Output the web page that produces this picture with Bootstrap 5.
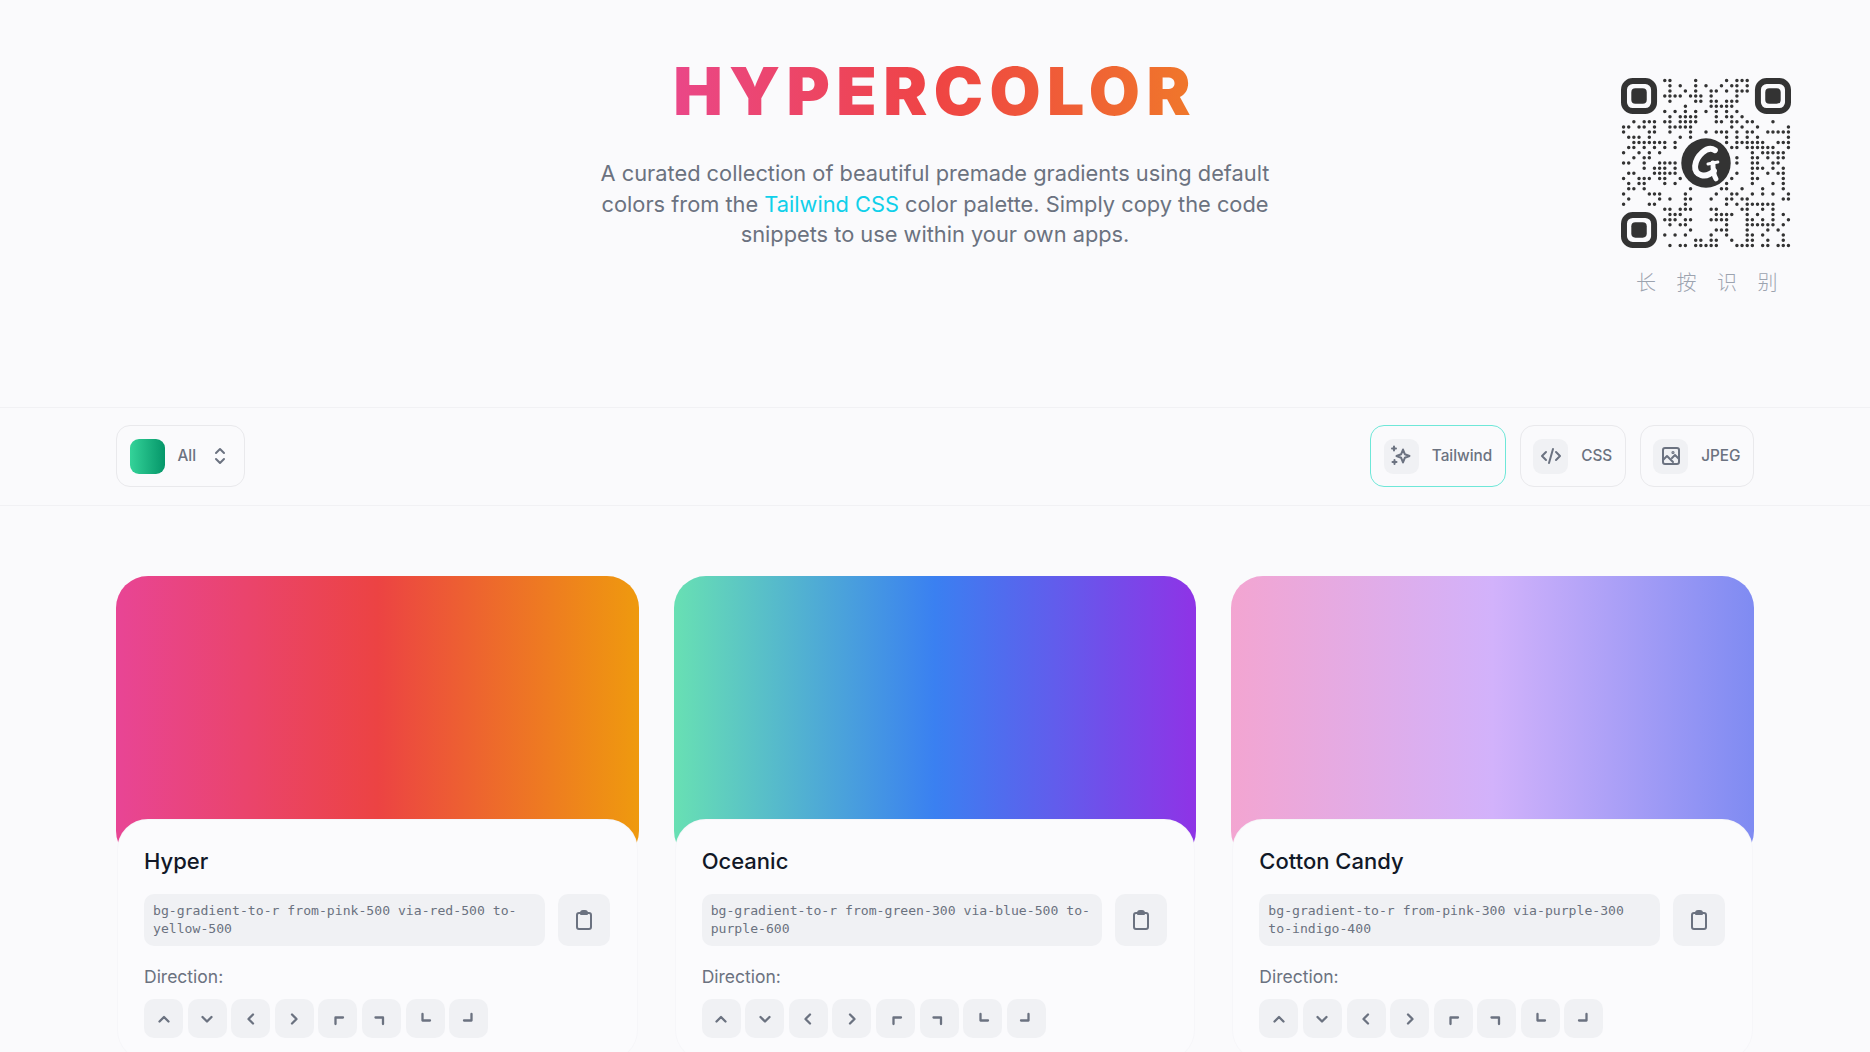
<!DOCTYPE html>
<html lang="en">
<head>
  <meta charset="UTF-8" />
  <meta name="viewport" content="width=device-width, initial-scale=1.0" />
  <title>Hypercolor</title>
  <link href="https://cdn.jsdelivr.net/npm/bootstrap@5.3.2/dist/css/bootstrap.min.css" rel="stylesheet" />
  <style>
    html, body { height: 100%; overflow: hidden; }
    body { background: #fafafc; font-family: Inter, "Noto Sans", sans-serif; color: #6b7280; }
    svg { display: block; }

    .hero { display: grid; grid-template-columns: 1fr 700px 1fr; height: 407px; }
    .hero-title { font-size: 66px; line-height: 82px; font-weight: 900; letter-spacing: 6.4px; margin: 50px 0 0; text-align: center; }
    .hero-title span { background: linear-gradient(to right, #ea4788, #ef4444 50%, #f0782a); -webkit-background-clip: text; background-clip: text; color: transparent; }
    .hero-text { font-size: 21.8px; line-height: 30.5px; text-align: center; margin: 26px 14px 0; }
    .hero-text a { color: #0fd0ea; text-decoration: none; }
    .qr-box { justify-self: end; width: 170px; margin: 78px 79px 0 0; }
    .qr-hint { font-family: Inter, "Noto Sans CJK SC", sans-serif; font-weight: 300; font-size: 20px; line-height: 26px; letter-spacing: 20.5px; color: #9ca3af; margin: 22px 0 0 15px; white-space: nowrap; }

    .filter-bar { height: 99px; padding: 17px 116px; border-top: 1px solid #f1f1f4; border-bottom: 1px solid #f1f1f4; }
    .tool-btn { height: 62px; padding: 0 12.5px; gap: 13px; font-size: 15.3px; font-weight: 500; color: #6b7280; background: transparent; border: 1.5px solid #e9e9ec; border-radius: 14px; }
    .tool-btn:hover { color: #6b7280; border-color: #e9e9ec; }
    .tool-btn.selected { border-color: #6ee7d8; }
    .tool-group { gap: 14px; }
    .tool-icon { width: 35px; height: 35px; border-radius: 9px; background: #f0f1f4; }
    .swatch { width: 35px; height: 35px; border-radius: 9px; background: linear-gradient(to right, #34d399, #059669); }
    .select-arrows { margin: 0 2px 0 2px; }

    .card-grid { display: grid; grid-template-columns: repeat(3, 1fr); gap: 35px; padding: 70px 116px 0; }
    .gradient-box { height: 287px; border-radius: 32px; }
    .gradient-panel { margin: -43px 2px 0; padding: 26px 27px 22px 26px; background: #fbfbfd; border-radius: 30px; box-shadow: 0 0 0 1px #f6f6f9; position: relative; }
    .gradient-name { font-size: 22px; line-height: 30px; font-weight: 500; color: #111827; margin: 0 0 18px; }
    .code-box { flex: 1; height: 52px; padding: 8px 9px; background: #f0f1f4; border-radius: 10px; font-family: "DejaVu Sans Mono", "Liberation Mono", monospace; font-size: 13.13px; line-height: 18px; color: #6b7280; }
    .copy-btn { width: 52px; height: 52px; padding: 0; border: 0; border-radius: 10px; background: #f0f1f4; }
    .code-row { gap: 13px; }
    .direction-label { font-size: 17.5px; line-height: 24px; margin: 19px 0 10px; }
    .dir-btn { width: 39px; height: 39px; padding: 0; border: 0; border-radius: 10px; background: #f0f1f4; }
    .dir-row { gap: 4.6px; }
    .stroke-icon { fill: none; stroke: #6b7280; stroke-width: 2; stroke-linecap: round; stroke-linejoin: round; }
    .dir-btn .stroke-icon { stroke-width: 2.3; }
  </style>
</head>
<body>

  <header class="hero">
    <div></div>
    <div>
      <h1 class="hero-title"><span>HYPERCOLOR</span></h1>
      <p class="hero-text">A curated collection of beautiful premade gradients using default colors from the <a href="#">Tailwind CSS</a> color palette. Simply copy the code snippets to use within your own apps.</p>
    </div>
    <div class="qr-box">
      <svg id="qrCode" width="170" height="170" viewBox="0 0 33 33"></svg>
      <div class="qr-hint">长按识别</div>
    </div>
  </header>

  <div class="filter-bar d-flex justify-content-between align-items-start">
    <button class="btn tool-btn d-flex align-items-center">
      <span class="swatch"></span>
      All
      <svg class="stroke-icon select-arrows" width="18" height="22" viewBox="0 0 18 22"><path d="M5 8l4-4 4 4M5 14l4 4 4-4" /></svg>
    </button>
    <div class="d-flex tool-group">
      <button class="btn tool-btn selected d-flex align-items-center">
        <span class="tool-icon d-flex align-items-center justify-content-center">
          <svg class="stroke-icon" width="22" height="22" viewBox="0 0 22 22"><path d="M13 4.5l1.8 4.7 4.7 1.8-4.7 1.8-1.8 4.7-1.8-4.7-4.7-1.8 4.7-1.8zM4 1.5v4M2 3.5h4M4.5 15v4M2.5 17h4" /></svg>
        </span>
        Tailwind
      </button>
      <button class="btn tool-btn d-flex align-items-center">
        <span class="tool-icon d-flex align-items-center justify-content-center">
          <svg class="stroke-icon" width="22" height="22" viewBox="0 0 22 22"><path d="M6 7l-4 4 4 4M16 7l4 4-4 4M13 4L9 18" /></svg>
        </span>
        CSS
      </button>
      <button class="btn tool-btn d-flex align-items-center">
        <span class="tool-icon d-flex align-items-center justify-content-center">
          <svg class="stroke-icon" width="22" height="22" viewBox="0 0 22 22"><rect x="3" y="3" width="16" height="16" rx="2" /><path d="M3 15l4-4 6 6M12 13l3-3 4 4" /><circle cx="13" cy="7.5" r=".6" /></svg>
        </span>
        JPEG
      </button>
    </div>
  </div>

  <main class="card-grid" id="cardGrid"></main>

  <script>
    const gradients = [
      { name: "Hyper", code: "bg-gradient-to-r from-pink-500 via-red-500 to-yellow-500", css: "#e84595, #ec4343, #ef9a0e" },
      { name: "Oceanic", code: "bg-gradient-to-r from-green-300 via-blue-500 to-purple-600", css: "#68e0b3, #3a80f1, #8f33e6" },
      { name: "Cotton Candy", code: "bg-gradient-to-r from-pink-300 via-purple-300 to-indigo-400", css: "#f3a5d1, #d2b2fb, #7f8bf2" }
    ];

    const directionIcons = [
      "M4.5 11.5L9 7l4.5 4.5", "M4.5 7L9 11.5 13.5 7", "M11 4.5L6.5 9l4.5 4.5", "M7 4.5L11.5 9 7 13.5",
      "M6.5 14V7.5H14", "M3.5 7.5H11V14", "M6.5 4v6.5H14", "M11.5 4v6.5H4"
    ];

    const grid = document.getElementById("cardGrid");
    gradients.forEach(item => {
      const buttons = directionIcons.map(d => `
        <button class="btn dir-btn d-flex align-items-center justify-content-center">
          <svg class="stroke-icon" width="18" height="18" viewBox="0 0 18 18"><path d="${d}" /></svg>
        </button>`).join("");

      grid.innerHTML += `
        <div>
          <div class="gradient-box" style="background: linear-gradient(to right, ${item.css});"></div>
          <div class="gradient-panel">
            <h5 class="gradient-name">${item.name}</h5>
            <div class="d-flex code-row">
              <div class="code-box">${item.code}</div>
              <button class="btn copy-btn d-flex align-items-center justify-content-center">
                <svg class="stroke-icon" width="24" height="24" viewBox="0 0 24 24"><rect x="5" y="5" width="14" height="16" rx="2" /><path d="M9 5a2 2 0 0 1 2-2h2a2 2 0 0 1 2 2v1H9z" /></svg>
              </button>
            </div>
            <div class="direction-label">Direction:</div>
            <div class="d-flex dir-row">${buttons}</div>
          </div>
        </div>`;
    });

    // qr modules, one list of columns per row
    const qrRows = [
      [8,9,14,20,22,23,24],
      [9,11,14,16,19,21,22,24],
      [9,12,14,17,18,20,22,23,24],
      [8,9,10,11,13,14,15,17,22],
      [9,14,15,17,18,20,21,22],
      [12,17,18,19,20,21],
      [8,10,12,14,16,18,20,22],
      [9,11,12,13,14,18,20,21,23],
      [2,4,5,6,8,9,11,12,13,14,18,19,21,22,24,25,29],
      [0,1,3,4,6,9,10,11,12,13,21,23,26,32],
      [0,5,6,9,13,16,18,19,20,22,24,25,28,29,30,31,32],
      [1,2,3,5,11,13,20,22,24,26,32],
      [2,3,4,5,6,7,8,10,20,22,23,24,25,26,27,30,31,32],
      [1,2,4,6,8,10,21,22,24,25,26,27,28,29,32],
      [0,3,5,7,21,25,27,28,29,30,31],
      [2,4,5,22,25,26,28,30,31],
      [0,1,4,7,8,9,10,22,25,26,29,30],
      [4,6,7,8,10,25,26,27,29,31],
      [1,2,6,7,8,9,10,21,22,25,28,30,31],
      [0,3,4,5,7,8,11,21,25,26,31],
      [1,3,4,8,10,19,20,25,29,31],
      [1,2,4,13,19,20,23,27,31],
      [0,5,6,7,12,18,21,22,25,27,29,32],
      [1,7,9,12,13,17,20,21,23,24,31,32],
      [0,5,6,12,20,22,24,25,26,27,28,29],
      [8,9,11,12,13,17,18,23,24,27,29],
      [9,10,11,18,19,20,21,24,26,29,31],
      [8,9,10,12,13,17,18,19,20,24,25,27,29,32],
      [9,11,12,20,24,25,26,27,28,29,31],
      [13,18,19,20,24,28,30],
      [8,10,12,17,20,24,25,27,31],
      [14,15,17,18,21,24,25,28,31],
      [9,11,12,14,15,16,17,18,22,23,24,25,27,28,30,31,32]
    ];

    let dots = "";
    qrRows.forEach((cols, r) => {
      cols.forEach(c => {
        if (Math.hypot(c - 16, r - 16) > 5.6) dots += `M${c + .5} ${r + .5}h0`;
      });
    });

    const finder = (x, y) => `
      <rect x="${x + .58}" y="${y + .58}" width="5.84" height="5.84" rx="1.7" fill="none" stroke="#333" stroke-width="1.16" />
      <rect x="${x + 2}" y="${y + 2}" width="3" height="3" rx=".8" fill="#333" />`;

    document.getElementById("qrCode").innerHTML = `
      <path d="${dots}" stroke="#333" stroke-width=".68" stroke-linecap="round" fill="none" />
      ${finder(0, 0)}${finder(26, 0)}${finder(0, 26)}
      <circle cx="16.5" cy="16.5" r="4.8" fill="#333" />
      <g fill="none" stroke="#fbfbfd" stroke-linecap="round" transform="translate(11.7 11.7) scale(.192)">
        <path d="M34 12C26 7 15 18 14 28c-1 10 11 13 19 5" stroke-width="6" />
        <path d="M27 26l10-2" stroke-width="3" />
        <path d="M32 25c0 6 0 11 3 16" stroke-width="5" />
      </g>`;
  </script>
  <script src="https://cdn.jsdelivr.net/npm/bootstrap@5.3.2/dist/js/bootstrap.bundle.min.js"></script>
</body>
</html>
